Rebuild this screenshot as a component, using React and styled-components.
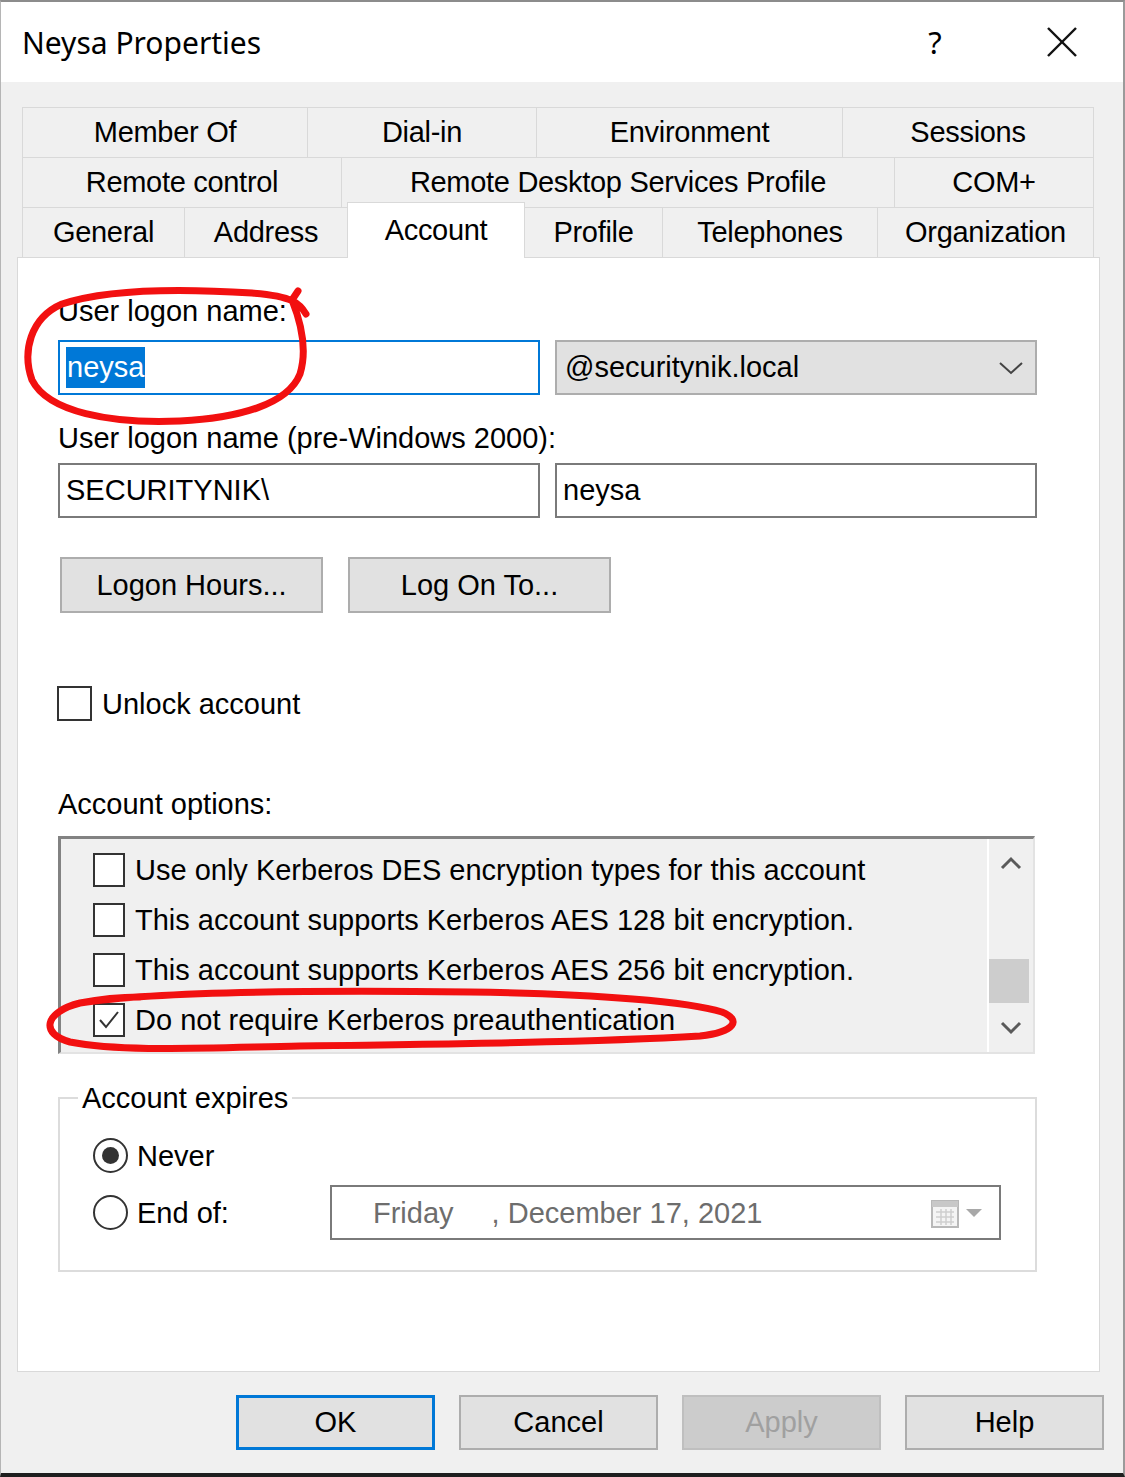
import React from 'react'
import styled, { createGlobalStyle } from 'styled-components'

const GlobalStyle = createGlobalStyle`
   html, body {
      margin: 0;
      padding: 0;
      background: #f0f0f0;
   }
   body {
      font-family: "Liberation Sans", Arial, sans-serif;
      color: #000;
   }
   * {
      box-sizing: border-box;
   }
`

const tabRows = [
   [
      { label: 'Member Of', w: 286 },
      { label: 'Dial-in', w: 229 },
      { label: 'Environment', w: 306 },
      { label: 'Sessions', w: 251 },
   ],
   [
      { label: 'Remote control', w: 320 },
      { label: 'Remote Desktop Services Profile', w: 553 },
      { label: 'COM+', w: 199 },
   ],
   [
      { label: 'General', w: 163 },
      { label: 'Address', w: 163 },
      { label: 'Account', w: 178, active: true },
      { label: 'Profile', w: 138 },
      { label: 'Telephones', w: 215 },
      { label: 'Organization', w: 216 },
   ],
]

const accountOptions = [
   { label: 'Use only Kerberos DES encryption types for this account' },
   { label: 'This account supports Kerberos AES 128 bit encryption.' },
   { label: 'This account supports Kerberos AES 256 bit encryption.' },
   { label: 'Do not require Kerberos preauthentication', checked: true },
]

const CheckMark = () => (
   <svg width="26" height="26" viewBox="0 0 26 26">
      <polyline points="4,13 10,20 22,5" fill="none" stroke="#333" strokeWidth="2" />
   </svg>
)

const App = () => {
   return (
      <>
         <GlobalStyle />
         <Window>
            <TitleBar>
               <Title>Neysa Properties</Title>
               <HelpMark>?</HelpMark>
               <CloseIcon viewBox="0 0 30 30">
                  <line x1="1" y1="1" x2="29" y2="29" stroke="#111" strokeWidth="2.4" />
                  <line x1="29" y1="1" x2="1" y2="29" stroke="#111" strokeWidth="2.4" />
               </CloseIcon>
            </TitleBar>

            <Body>
               <TabStrip>
                  {tabRows.map((row, i) => (
                     <TabRow key={i}>
                        {row.map((tab) => (
                           <Tab key={tab.label} $w={tab.w} $active={tab.active}>
                              {tab.label}
                           </Tab>
                        ))}
                     </TabRow>
                  ))}
               </TabStrip>

               <Panel>
                  <Label>User logon name:</Label>
                  <FieldRow $mt={12}>
                     <TextBox $focus>
                        <Selected>neysa</Selected>
                     </TextBox>
                     <Combo>
                        <span>@securitynik.local</span>
                        <svg width="24" height="14" viewBox="0 0 24 14">
                           <polyline points="1,2 12,12 23,2" fill="none" stroke="#444" strokeWidth="2" />
                        </svg>
                     </Combo>
                  </FieldRow>

                  <Label $mt={26}>User logon name (pre-Windows 2000):</Label>
                  <FieldRow $mt={8}>
                     <TextBox>SECURITYNIK\</TextBox>
                     <TextBox>neysa</TextBox>
                  </FieldRow>

                  <ButtonRow>
                     <PushButton>Logon Hours...</PushButton>
                     <PushButton>Log On To...</PushButton>
                  </ButtonRow>

                  <CheckRow>
                     <CheckBox />
                     <span>Unlock account</span>
                  </CheckRow>

                  <Label $mt={66}>Account options:</Label>
                  <ListBox>
                     <ListItems>
                        {accountOptions.map((opt) => (
                           <ListItem key={opt.label}>
                              <SmallCheck>{opt.checked && <CheckMark />}</SmallCheck>
                              <span>{opt.label}</span>
                           </ListItem>
                        ))}
                     </ListItems>
                     <ScrollBar>
                        <ScrollArrow>
                           <svg width="22" height="14" viewBox="0 0 22 14">
                              <polyline points="2,12 11,3 20,12" fill="none" stroke="#5a5a5a" strokeWidth="3" />
                           </svg>
                        </ScrollArrow>
                        <ScrollTrack>
                           <ScrollThumb />
                        </ScrollTrack>
                        <ScrollArrow>
                           <svg width="22" height="14" viewBox="0 0 22 14">
                              <polyline points="2,2 11,11 20,2" fill="none" stroke="#5a5a5a" strokeWidth="3" />
                           </svg>
                        </ScrollArrow>
                     </ScrollBar>
                  </ListBox>

                  <GroupBox>
                     <Legend>Account expires</Legend>
                     <RadioRow $mt={23}>
                        <Radio $checked />
                        <span>Never</span>
                     </RadioRow>
                     <RadioRow $mt={12}>
                        <Radio />
                        <span>End of:</span>
                        <DatePicker>
                           <DateText>
                              <span>Friday</span>
                              <DateRest>, December 17, 2021</DateRest>
                           </DateText>
                           <DateIcons>
                              <svg width="28" height="30" viewBox="0 0 28 30">
                                 <rect x="1" y="3" width="26" height="26" fill="#f4f4f4" stroke="#b8b8b8" strokeWidth="2" />
                                 <rect x="1" y="3" width="26" height="6" fill="#c8c8c8" />
                                 <line x1="5" y1="14" x2="23" y2="14" stroke="#cfcfcf" strokeWidth="1.5" />
                                 <line x1="5" y1="19" x2="23" y2="19" stroke="#cfcfcf" strokeWidth="1.5" />
                                 <line x1="5" y1="24" x2="23" y2="24" stroke="#cfcfcf" strokeWidth="1.5" />
                                 <line x1="10" y1="11" x2="10" y2="27" stroke="#cfcfcf" strokeWidth="1.5" />
                                 <line x1="15" y1="11" x2="15" y2="27" stroke="#cfcfcf" strokeWidth="1.5" />
                                 <line x1="20" y1="11" x2="20" y2="27" stroke="#cfcfcf" strokeWidth="1.5" />
                              </svg>
                              <svg width="18" height="10" viewBox="0 0 18 10">
                                 <polygon points="1,1 17,1 9,9" fill="#a8a8a8" />
                              </svg>
                           </DateIcons>
                        </DatePicker>
                     </RadioRow>
                  </GroupBox>
               </Panel>
            </Body>

            <Footer>
               <DialogButton $default>OK</DialogButton>
               <DialogButton>Cancel</DialogButton>
               <DialogButton $disabled>Apply</DialogButton>
               <DialogButton>Help</DialogButton>
            </Footer>

            <Annotations viewBox="0 0 1125 1477">
               <path
                  d="M 306 314 C 300 304, 294 296, 252 293 C 190 289, 110 288, 62 304 C 30 318, 22 352, 32 380 C 48 412, 110 424, 180 421 C 240 418, 288 404, 300 374 C 308 348, 300 320, 292 300 L 298 291"
                  fill="none"
                  stroke="#f21010"
                  strokeWidth="7"
                  strokeLinecap="round"
                  strokeLinejoin="round"
               />
               <path
                  d="M 80 1003 C 150 992, 300 990, 470 992 C 600 994, 690 1002, 722 1012 C 742 1020, 735 1032, 700 1036 C 600 1042, 450 1044, 300 1046 C 200 1048, 120 1052, 70 1042 C 40 1034, 44 1012, 80 1003 C 100 999, 125 997, 140 997"
                  fill="none"
                  stroke="#f21010"
                  strokeWidth="7"
                  strokeLinecap="round"
                  strokeLinejoin="round"
               />
            </Annotations>
         </Window>
      </>
   )
}

export default App

const Window = styled.div`
   position: relative;
   width: 1125px;
   height: 1477px;
   display: flex;
   flex-direction: column;
   background: #f0f0f0;
   border-top: 2px solid #8c8c8c;
   border-left: 1px solid #b5b5b5;
   border-right: 2px solid #9a9a9a;
   border-bottom: 4px solid #1e1e1e;
   overflow: hidden;
`
const TitleBar = styled.div`
   height: 80px;
   display: flex;
   align-items: center;
   padding-left: 21px;
   background: #fff;
`
const Title = styled.div`
   flex: 1;
   font-family: "Noto Sans", "Open Sans", sans-serif;
   font-size: 30px;
   color: #000;
`
const HelpMark = styled.div`
   width: 40px;
   text-align: center;
   font-family: "Noto Sans", sans-serif;
   font-size: 31px;
   margin-right: 92px;
`
const CloseIcon = styled.svg`
   width: 30px;
   height: 30px;
   margin-right: 46px;
`
const Body = styled.div`
   flex: 1;
   display: flex;
   flex-direction: column;
   padding: 25px 23px 0 16px;
`
const TabStrip = styled.div`
   margin: 0 6px 0 5px;
`
const TabRow = styled.div`
   display: flex;
   align-items: flex-start;
   height: 50px;
`
const Tab = styled.div`
   flex: none;
   width: ${(p) => p.$w}px;
   height: ${(p) => (p.$active ? 56 : 50)}px;
   margin-top: ${(p) => (p.$active ? -5 : 0)}px;
   display: flex;
   align-items: center;
   justify-content: center;
   background: ${(p) => (p.$active ? '#fff' : '#f0f0f0')};
   border-top: 1px solid #d9d9d9;
   border-right: 1px solid #d9d9d9;
   border-left: ${(p) => (p.$active ? '1px solid #d9d9d9' : 'none')};
   margin-left: ${(p) => (p.$active ? -1 : 0)}px;
   font-size: 29px;
   letter-spacing: -0.3px;
   white-space: nowrap;
   position: ${(p) => (p.$active ? 'relative' : 'static')};
   z-index: ${(p) => (p.$active ? 2 : 'auto')};

   &:first-child {
      border-left: 1px solid #d9d9d9;
   }
`
const Panel = styled.div`
   flex: 1;
   display: flex;
   flex-direction: column;
   background: #fff;
   border: 1px solid #d9d9d9;
   padding: 36px 62px 0 40px;
`
const Label = styled.div`
   font-size: 29px;
   line-height: 34px;
   margin-top: ${(p) => p.$mt || 0}px;
   white-space: nowrap;
`
const FieldRow = styled.div`
   display: grid;
   grid-template-columns: 482px 482px;
   column-gap: 15px;
   margin-top: ${(p) => p.$mt}px;
`
const TextBox = styled.div`
   height: 55px;
   display: flex;
   align-items: center;
   padding: 0 6px;
   background: #fff;
   border: 2px solid ${(p) => (p.$focus ? '#0078d7' : '#7a7a7a')};
   font-size: 29px;
   white-space: nowrap;
`
const Selected = styled.span`
   background: #0078d7;
   color: #fff;
   line-height: 41px;
   padding: 0 1px;
`
const Combo = styled(TextBox)`
   justify-content: space-between;
   padding: 0 12px 0 8px;
   background: #e1e1e1;
   border-color: #adadad;
`
const ButtonRow = styled.div`
   display: flex;
   gap: 25px;
   margin-top: 39px;
   padding-left: 2px;
`
const PushButton = styled.div`
   width: 263px;
   height: 56px;
   display: flex;
   align-items: center;
   justify-content: center;
   background: #e1e1e1;
   border: 2px solid #adadad;
   font-size: 29px;
`
const CheckRow = styled.div`
   display: flex;
   align-items: center;
   gap: 10px;
   margin: 73px 0 0 -1px;
   font-size: 29px;
   line-height: 34px;
`
const CheckBox = styled.div`
   width: 35px;
   height: 35px;
   background: #fff;
   border: 2px solid #333;
`
const ListBox = styled.div`
   display: flex;
   width: 977px;
   height: 218px;
   margin-top: 15px;
   background: #f0f0f0;
   border-top: 3px solid #828282;
   border-left: 3px solid #828282;
   border-right: 2px solid #e3e3e3;
   border-bottom: 2px solid #e3e3e3;
`
const ListItems = styled.div`
   flex: 1;
   padding: 6px 0 0 32px;
`
const ListItem = styled.div`
   height: 50px;
   display: flex;
   align-items: center;
   gap: 10px;
   font-size: 29px;
   white-space: nowrap;
`
const SmallCheck = styled.div`
   width: 32px;
   height: 34px;
   display: flex;
   align-items: center;
   justify-content: center;
   background: #fff;
   border: 2px solid #333;
`
const ScrollBar = styled.div`
   width: 46px;
   display: flex;
   flex-direction: column;
   border-left: 2px solid #fff;
`
const ScrollArrow = styled.div`
   height: 48px;
   display: flex;
   align-items: center;
   justify-content: center;
`
const ScrollTrack = styled.div`
   flex: 1;
   padding: 72px 4px 0 0;
`
const ScrollThumb = styled.div`
   height: 44px;
   background: #cdcdcd;
`
const GroupBox = styled.fieldset`
   margin: 27px 0 0;
   width: 979px;
   min-width: 0;
   border: 2px solid #dcdcdc;
   padding: 0 34px 30px 33px;
`
const Legend = styled.legend`
   margin-left: -15px;
   padding: 0 4px;
   font-size: 29px;
   line-height: 34px;
`
const RadioRow = styled.div`
   display: flex;
   align-items: center;
   gap: 9px;
   margin-top: ${(p) => p.$mt}px;
   font-size: 29px;
   line-height: 34px;
`
const Radio = styled.div`
   width: 35px;
   height: 35px;
   border-radius: 50%;
   background: #fff;
   border: 2px solid #333;
   display: flex;
   align-items: center;
   justify-content: center;

   &::after {
      content: '';
      display: ${(p) => (p.$checked ? 'block' : 'none')};
      width: 17px;
      height: 17px;
      border-radius: 50%;
      background: #333;
   }
`
const DatePicker = styled.div`
   margin-left: auto;
   width: 671px;
   height: 55px;
   display: flex;
   align-items: center;
   justify-content: space-between;
   padding: 0 16px 0 41px;
   background: #fff;
   border: 2px solid #7a7a7a;
   color: #6d6d6d;
`
const DateText = styled.div`
   display: flex;
   white-space: nowrap;
`
const DateRest = styled.span`
   margin-left: 38px;
`
const DateIcons = styled.div`
   display: flex;
   align-items: center;
   gap: 6px;
`
const Footer = styled.div`
   display: flex;
   justify-content: flex-end;
   gap: 24px;
   padding: 23px 19px 23px 0;
`
const DialogButton = styled.div`
   width: 199px;
   height: 55px;
   display: flex;
   align-items: center;
   justify-content: center;
   font-size: 29px;
   background: ${(p) => (p.$disabled ? '#cccccc' : '#e1e1e1')};
   color: ${(p) => (p.$disabled ? '#a0a0a0' : '#000')};
   border: ${(p) => (p.$default ? '3px solid #0078d7' : `2px solid ${p.$disabled ? '#bfbfbf' : '#adadad'}`)};
`
const Annotations = styled.svg`
   position: absolute;
   top: -2px;
   left: -1px;
   width: 1125px;
   height: 1477px;
   pointer-events: none;
`
